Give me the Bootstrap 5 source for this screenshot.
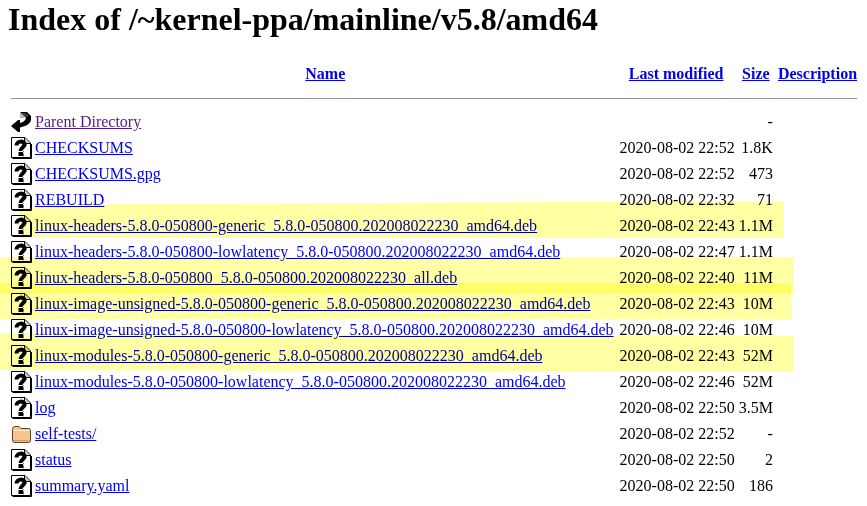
<!doctype html>
<html lang="en"><head><meta charset="utf-8"><title>Index of /~kernel-ppa/mainline/v5.8/amd64</title>
<link href="https://cdn.jsdelivr.net/npm/bootstrap@5.3.0/dist/css/bootstrap.min.css" rel="stylesheet">
<style>
html,body{height:506px;overflow:hidden}
body{margin:0;padding:8px;font-family:"Liberation Serif",serif;font-size:16px;line-height:normal;color:#000;background:#fff;position:relative}
h1.ttl{font-family:"Liberation Serif",serif;font-size:32px;font-weight:700;line-height:normal;margin:-7px 0 22px}
.idx{border-collapse:separate;border-spacing:2px;white-space:nowrap}
.idx th,.idx td{padding:1px;vertical-align:middle}
.idx th{text-align:center;font-weight:700}
.idx td.nm{padding-right:3px}
.idx th.nm{padding-left:3px;padding-right:3px}
.idx th.lm{padding-right:3px}
.idx th.ds{padding-left:2px}
.idx a{color:#00e;text-decoration:underline}
.idx a.vis{color:#551a8b}
.idx .ic{width:22px;min-width:22px;height:24px;padding:1px 0 1px 1px;line-height:0}
.idx td.sz{text-align:right}
.idx hr{margin:0;opacity:1;border:0;height:1px;background:#999}
.idx tr.rule th{padding:10px 1px 9px}
.ph{position:absolute;background:#ff0;opacity:.36;mix-blend-mode:multiply;pointer-events:none}
.p1{left:19px;top:201px;width:765px;height:37px;clip-path:polygon(0 8px,101px 3px,100% 0,100% 100%,0 100%)}
.p2{left:0;top:257px;width:794px;height:36px}
.p3{left:0;top:283px;width:791px;height:36px}
.p4{left:0;top:333px;width:794px;height:39px;clip-path:polygon(0 0,100% 3px,100% 100%,0 37px)}
</style></head><body>
<h1 class="ttl">Index of /~kernel-ppa/mainline/v5.8/amd64</h1>
<svg width="0" height="0" class="d-block position-absolute"><defs>
<g id="unk"><path d="M.5 .5H14L19.500 6V20.500H.5Z" fill="#fff" stroke="#000"/><path d="M13.500 1V6.500H19" fill="#ccc" stroke="#000"/><path d="M1.500 21.500H20.500V7" fill="none" stroke="#000"/><path d="M5.500 8.500C5.500 3.500 13.500 3.500 13.500 7.500C13.500 10.500 9.500 10.500 9.500 14" fill="none" stroke="#000" stroke-width="4"/><rect x="7.500" y="15" width="4.500" height="4" fill="#000"/><path d="M15.500 7V9M12 14.500H13M12.500 16V19.500" stroke="#777" fill="none"/></g>
<g id="fld"><path d="M1.500 6.500Q1.500 3.500 4 3.500H8L10 5.500H17.500Q19.500 5.500 19.500 7.500V17.500Q19.500 19.500 17.500 19.500H4Q1.500 19.500 1.500 17.500Z" fill="#f6c48c" stroke="#5e4020"/><path d="M2.500 7.500H18.500" stroke="#ffe6c8" fill="none"/><path d="M2.500 17.500H18.500" stroke="#a06c34" stroke-dasharray="1 1" fill="none"/></g>
<g id="bck"><path d="M9 1H16L20 5V9Q19 13 14 15L9 16.500V21H7L0 15L7 9H9V12Q14 11 15 7Z" fill="#000"/><path d="M10 2V7M12 2V7M14 2V6M16 3V6" stroke="#777" fill="none"/></g>
</defs></svg>
<table class="idx"><thead>
<tr><th class="ic"></th><th class="nm"><a href="#">Name</a></th><th class="lm"><a href="#">Last modified</a></th><th><a href="#">Size</a></th><th class="ds"><a href="#">Description</a></th></tr>
<tr class="rule"><th colspan="5"><hr></th></tr></thead>
<tbody>
<tr><td class="ic"><svg width="21" height="22"><use href="#bck"/></svg></td><td class="nm"><a class="vis" href="#">Parent Directory</a></td><td>&nbsp;</td><td class="sz">- </td><td>&nbsp;</td></tr>
<tr><td class="ic"><svg width="21" height="22"><use href="#unk"/></svg></td><td class="nm"><a href="#">CHECKSUMS</a></td><td>2020-08-02 22:52</td><td class="sz">1.8K</td><td>&nbsp;</td></tr>
<tr><td class="ic"><svg width="21" height="22"><use href="#unk"/></svg></td><td class="nm"><a href="#">CHECKSUMS.gpg</a></td><td>2020-08-02 22:52</td><td class="sz">473</td><td>&nbsp;</td></tr>
<tr><td class="ic"><svg width="21" height="22"><use href="#unk"/></svg></td><td class="nm"><a href="#">REBUILD</a></td><td>2020-08-02 22:32</td><td class="sz">71</td><td>&nbsp;</td></tr>
<tr><td class="ic"><svg width="21" height="22"><use href="#unk"/></svg></td><td class="nm"><a href="#">linux-headers-5.8.0-050800-generic_5.8.0-050800.202008022230_amd64.deb</a></td><td>2020-08-02 22:43</td><td class="sz">1.1M</td><td>&nbsp;</td></tr>
<tr><td class="ic"><svg width="21" height="22"><use href="#unk"/></svg></td><td class="nm"><a href="#">linux-headers-5.8.0-050800-lowlatency_5.8.0-050800.202008022230_amd64.deb</a></td><td>2020-08-02 22:47</td><td class="sz">1.1M</td><td>&nbsp;</td></tr>
<tr><td class="ic"><svg width="21" height="22"><use href="#unk"/></svg></td><td class="nm"><a href="#">linux-headers-5.8.0-050800_5.8.0-050800.202008022230_all.deb</a></td><td>2020-08-02 22:40</td><td class="sz">11M</td><td>&nbsp;</td></tr>
<tr><td class="ic"><svg width="21" height="22"><use href="#unk"/></svg></td><td class="nm"><a href="#">linux-image-unsigned-5.8.0-050800-generic_5.8.0-050800.202008022230_amd64.deb</a></td><td>2020-08-02 22:43</td><td class="sz">10M</td><td>&nbsp;</td></tr>
<tr><td class="ic"><svg width="21" height="22"><use href="#unk"/></svg></td><td class="nm"><a href="#">linux-image-unsigned-5.8.0-050800-lowlatency_5.8.0-050800.202008022230_amd64.deb</a></td><td>2020-08-02 22:46</td><td class="sz">10M</td><td>&nbsp;</td></tr>
<tr><td class="ic"><svg width="21" height="22"><use href="#unk"/></svg></td><td class="nm"><a href="#">linux-modules-5.8.0-050800-generic_5.8.0-050800.202008022230_amd64.deb</a></td><td>2020-08-02 22:43</td><td class="sz">52M</td><td>&nbsp;</td></tr>
<tr><td class="ic"><svg width="21" height="22"><use href="#unk"/></svg></td><td class="nm"><a href="#">linux-modules-5.8.0-050800-lowlatency_5.8.0-050800.202008022230_amd64.deb</a></td><td>2020-08-02 22:46</td><td class="sz">52M</td><td>&nbsp;</td></tr>
<tr><td class="ic"><svg width="21" height="22"><use href="#unk"/></svg></td><td class="nm"><a href="#">log</a></td><td>2020-08-02 22:50</td><td class="sz">3.5M</td><td>&nbsp;</td></tr>
<tr><td class="ic"><svg width="21" height="22"><use href="#fld"/></svg></td><td class="nm"><a href="#">self-tests/</a></td><td>2020-08-02 22:52</td><td class="sz">- </td><td>&nbsp;</td></tr>
<tr><td class="ic"><svg width="21" height="22"><use href="#unk"/></svg></td><td class="nm"><a href="#">status</a></td><td>2020-08-02 22:50</td><td class="sz">2</td><td>&nbsp;</td></tr>
<tr><td class="ic"><svg width="21" height="22"><use href="#unk"/></svg></td><td class="nm"><a href="#">summary.yaml</a></td><td>2020-08-02 22:50</td><td class="sz">186</td><td>&nbsp;</td></tr>
</tbody></table>
<div class="ph p1"></div><div class="ph p2"></div><div class="ph p3"></div><div class="ph p4"></div>
<script src="https://cdn.jsdelivr.net/npm/bootstrap@5.3.0/dist/js/bootstrap.bundle.min.js"></script>
</body></html>
